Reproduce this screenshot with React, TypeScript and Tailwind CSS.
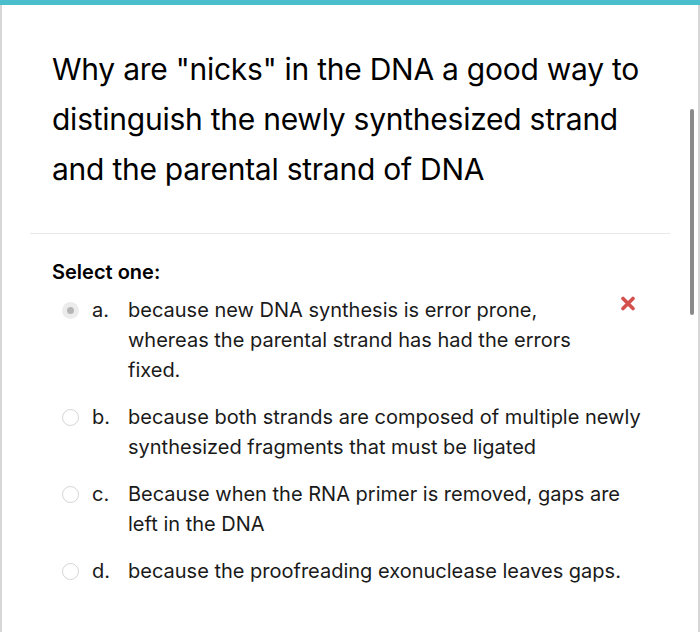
const options = [
  {
    letter: "a.",
    text: "because new DNA synthesis is error prone, whereas the parental strand has had the errors fixed.",
    checked: true,
    wrong: true,
  },
  {
    letter: "b.",
    text: "because both strands are composed of multiple newly synthesized fragments that must be ligated",
  },
  {
    letter: "c.",
    text: "Because when the RNA primer is removed, gaps are left in the DNA",
  },
  {
    letter: "d.",
    text: "because the proofreading exonuclease leaves gaps.",
  },
];

function Radio({ checked }: { checked?: boolean }) {
  return (
    <span
      className={
        checked
          ? "mt-[7px] flex h-[17px] w-[17px] shrink-0 items-center justify-center rounded-full bg-[#ececec]"
          : "mt-[7px] flex h-[17px] w-[17px] shrink-0 items-center justify-center rounded-full border-[1.5px] border-[#d4d4d4] bg-white"
      }
    >
      {checked && <span className="h-[7px] w-[7px] rounded-full bg-[#b5b5b5]" />}
    </span>
  );
}

function WrongMark() {
  return (
    <svg width="16" height="15" viewBox="0 0 16 15" className="ml-auto mr-[12px] mt-[1px] shrink-0">
      <path d="M3 2.5 L13 12.5 M13 2.5 L3 12.5" stroke="#d4504d" strokeWidth="3.6" strokeLinecap="round" />
    </svg>
  );
}

export default function App() {
  return (
    <div className="flex h-[632px] w-[700px] flex-col overflow-hidden bg-white font-['Inter',sans-serif] text-black">
      <div className="h-[5px] shrink-0 bg-[#4bbecb]" />
      <div className="relative flex flex-1 border-x-2 border-[#d6d6d6]">
        <div className="flex-1">
          <div className="pl-[50px] pr-[20px] pt-[39px] text-[30px] leading-[50px] tracking-[-0.25px]">
            Why are "nicks" in the DNA a good way to distinguish the newly synthesized strand and the parental strand of DNA
          </div>
          <div className="mx-[28px] mt-[39px] h-px bg-[#e8e8e8]" />
          <div className="px-[50px] pt-[25px] text-[20px] font-semibold leading-[26px]">Select one:</div>
          <div className="mt-[10px] flex flex-col gap-[17px] pl-[60px] pr-[50px]">
            {options.map((o) => (
              <div key={o.letter} className="flex items-start text-[20px] leading-[30px] text-[#1a1a1a]">
                <Radio checked={o.checked} />
                <span className="w-[49px] shrink-0 pl-[13px]">{o.letter}</span>
                <span className={o.wrong ? "w-[445px]" : "flex-1"}>{o.text}</span>
                {o.wrong ? <WrongMark /> : null}
              </div>
            ))}
          </div>
        </div>
        <div className="absolute right-[4px] top-[104px] h-[206px] w-[4px] rounded-full bg-[#8a8a8a]" />
      </div>
    </div>
  );
}
